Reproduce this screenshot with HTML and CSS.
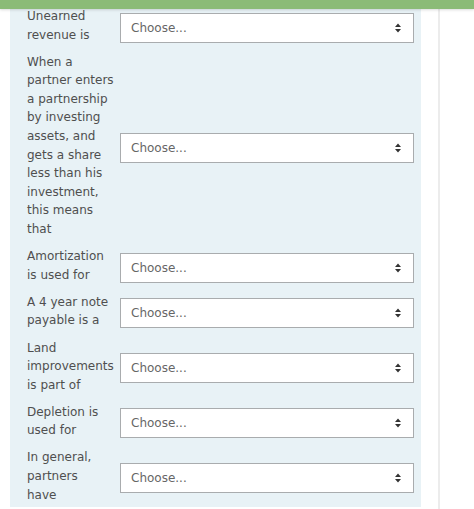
FILE: index.html
```html
<!DOCTYPE html>
<html lang="en">
<head>
    <meta charset="UTF-8">
    <meta name="viewport" content="width=device-width, initial-scale=1.0">
    <title>Matching question</title>
    <link rel="stylesheet" href="styles.css">
</head>
<body>
    <!-- Pasek nawigacji (przykryty u góry) -->
    <div class="topbar"></div>

    <div class="page">
        <div class="panel">
            <div class="row">
                <label class="label">Unearned<br>revenue is</label>
                <span class="select-wrap">
                    <select class="select"><option>Choose...</option></select>
                    <svg class="arrows" width="8" height="10" viewBox="0 0 8 10"><path d="M4 0.5 L7 4 L1 4 Z M4 9.5 L7 6 L1 6 Z" fill="#333"/></svg>
                </span>
            </div>
            <div class="row">
                <label class="label">When a<br>partner enters<br>a partnership<br>by investing<br>assets, and<br>gets a share<br>less than his<br>investment,<br>this means<br>that</label>
                <span class="select-wrap">
                    <select class="select"><option>Choose...</option></select>
                    <svg class="arrows" width="8" height="10" viewBox="0 0 8 10"><path d="M4 0.5 L7 4 L1 4 Z M4 9.5 L7 6 L1 6 Z" fill="#333"/></svg>
                </span>
            </div>
            <div class="row">
                <label class="label">Amortization<br>is used for</label>
                <span class="select-wrap">
                    <select class="select"><option>Choose...</option></select>
                    <svg class="arrows" width="8" height="10" viewBox="0 0 8 10"><path d="M4 0.5 L7 4 L1 4 Z M4 9.5 L7 6 L1 6 Z" fill="#333"/></svg>
                </span>
            </div>
            <div class="row">
                <label class="label">A 4 year note<br>payable is a</label>
                <span class="select-wrap">
                    <select class="select"><option>Choose...</option></select>
                    <svg class="arrows" width="8" height="10" viewBox="0 0 8 10"><path d="M4 0.5 L7 4 L1 4 Z M4 9.5 L7 6 L1 6 Z" fill="#333"/></svg>
                </span>
            </div>
            <div class="row">
                <label class="label">Land<br>improvements<br>is part of</label>
                <span class="select-wrap">
                    <select class="select"><option>Choose...</option></select>
                    <svg class="arrows" width="8" height="10" viewBox="0 0 8 10"><path d="M4 0.5 L7 4 L1 4 Z M4 9.5 L7 6 L1 6 Z" fill="#333"/></svg>
                </span>
            </div>
            <div class="row">
                <label class="label">Depletion is<br>used for</label>
                <span class="select-wrap">
                    <select class="select"><option>Choose...</option></select>
                    <svg class="arrows" width="8" height="10" viewBox="0 0 8 10"><path d="M4 0.5 L7 4 L1 4 Z M4 9.5 L7 6 L1 6 Z" fill="#333"/></svg>
                </span>
            </div>
            <div class="row">
                <label class="label">In general,<br>partners<br>have</label>
                <span class="select-wrap">
                    <select class="select"><option>Choose...</option></select>
                    <svg class="arrows" width="8" height="10" viewBox="0 0 8 10"><path d="M4 0.5 L7 4 L1 4 Z M4 9.5 L7 6 L1 6 Z" fill="#333"/></svg>
                </span>
            </div>
        </div>
        <div class="sidebar"></div>
    </div>
</body>
</html>
```

FILE: styles.css
```css
/* Ustawienia ogólne */
body {
    font-family: "DejaVu Sans", sans-serif;
    margin: 0;
    padding: 0;
    background-color: #fff;
    color: #4f4f4f;
}

/* Zielony pasek u góry */
.topbar {
    position: absolute;
    top: 0;
    left: 0;
    right: 0;
    height: 9px;
    background-color: #8bbb77;
    box-shadow: 0 1px 3px rgba(0, 0, 0, 0.15);
    z-index: 10;
}

.page {
    display: flex;
    padding-left: 10px;
    min-height: 509px;
}

/* Panel z pytaniami */
.panel {
    width: 411px;
    box-sizing: border-box;
    background-color: #e8f2f6;
    padding: 9px 7px 1px 17px;
    align-self: flex-start;
}

.row {
    display: flex;
    align-items: center;
    margin-bottom: 8.5px;
}

.row:last-child {
    margin-bottom: 0;
}

.label {
    width: 93px;
    flex-shrink: 0;
    margin: -2px 0 2px;
    font-size: 12px;
    line-height: 18.6px;
    white-space: nowrap;
}

.select-wrap {
    position: relative;
    display: block;
    width: 294px;
}

.select {
    appearance: none;
    -webkit-appearance: none;
    display: block;
    width: 100%;
    height: 30px;
    padding: 0 10px;
    border: 1px solid #a9acae;
    border-radius: 0;
    background-color: #fff;
    font-family: "DejaVu Sans", sans-serif;
    font-size: 12px;
    color: #666;
}

.arrows {
    position: absolute;
    right: 12px;
    top: 10px;
    pointer-events: none;
}

/* Pasek z prawej strony */
.sidebar {
    margin-left: 17px;
    border-left: 2px solid #ececec;
    flex: 1;
}
```
